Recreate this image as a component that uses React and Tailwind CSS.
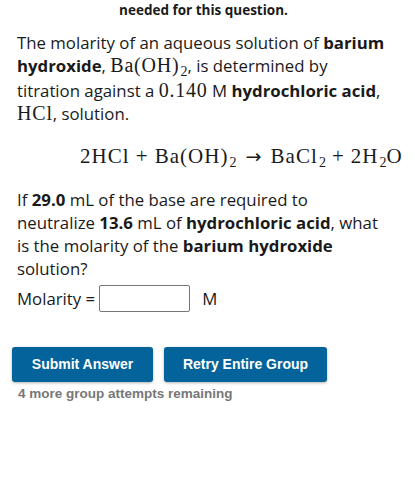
import React from "react";

const sans = { fontFamily: '"Open Sans", sans-serif' };

const M = ({ children }) => (
  <span className="font-['Liberation_Serif',serif] text-[20px] tracking-[0.04em]">{children}</span>
);

const Sub = ({ children }) => (
  <span className="text-[14px] relative top-[4px] ml-[1px] tracking-normal">{children}</span>
);

const Op = ({ children }) => <span className="mx-[6px]">{children}</span>;

export default function App() {
  return (
    <div className="w-[415px] h-[496px] bg-white text-[#1a1a1a] overflow-hidden" style={sans}>
      <div className="text-center font-bold text-[13.5px] leading-[16px] pt-[2px] pr-[8px]">
        needed for this question.
      </div>

      <div className="pl-[17px] pr-[24px] pt-[13px] text-[16.8px] leading-[23px]">
        <p>
          The molarity of an aqueous solution of <b>barium hydroxide</b>,{" "}
          <M>
            Ba(OH)<Sub>2</Sub>
          </M>
          , is determined by titration against a <M>0.140</M> M{" "}
          <b>hydrochloric acid</b>, <M>HCl</M>, solution.
        </p>

        <div className="pl-[63px] pt-[18px] pb-[16px] font-['Liberation_Serif',serif] text-[21px] leading-[26px] tracking-[0.05em] whitespace-nowrap">
          2HCl<Op>+</Op>Ba(OH)<Sub>2</Sub>
          <span className="mx-[9px] font-['DejaVu_Sans',sans-serif] text-[19px] tracking-normal">→</span>
          BaCl<Sub>2</Sub>
          <Op>+</Op>2H<Sub>2</Sub>O
        </div>

        <p>
          If <b>29.0</b> mL of the base are required to
          <br />
          neutralize <b>13.6</b> mL of <b>hydrochloric acid</b>, what
          <br />
          is the molarity of the <b>barium hydroxide</b>
          <br />
          solution?
        </p>

        <div className="flex items-center mt-[5px]">
          <span>Molarity =</span>
          <input
            type="text"
            className="ml-[4px] w-[91px] h-[27px] border border-[#767676] rounded-[2px] outline-none"
          />
          <span className="ml-[12px]">M</span>
        </div>
      </div>

      <div className="px-[12px] pt-[35px] font-['Liberation_Sans',sans-serif]">
        <div className="flex gap-[11px]">
          <button className="w-[141px] h-[35px] bg-[#03639a] text-white font-bold text-[14px] rounded-[3px] shadow-[0_1px_3px_rgba(0,0,0,0.3)]">
            Submit Answer
          </button>
          <button className="w-[163px] h-[35px] bg-[#03639a] text-white font-bold text-[14px] rounded-[3px] shadow-[0_1px_3px_rgba(0,0,0,0.3)]">
            Retry Entire Group
          </button>
        </div>
        <div className="pl-[6px] pt-[2px] text-[13.5px] font-bold text-[#777]">
          4 more group attempts remaining
        </div>
      </div>
    </div>
  );
}
